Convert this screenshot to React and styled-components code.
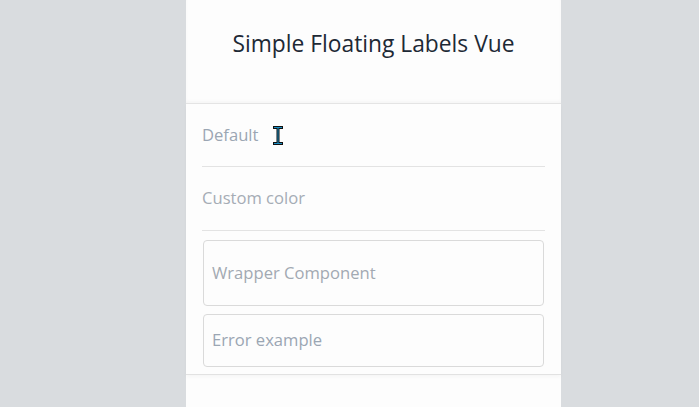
import React from "react";
import styled, { createGlobalStyle } from "styled-components";

const GlobalStyle = createGlobalStyle`
  html, body {
    margin: 0;
    padding: 0;
    background: #d9dcdf;
    font-family: "Open Sans", "Noto Sans", sans-serif;
  }
`;

const Page = styled.div`
  display: flex;
  min-height: 407px;
  padding-left: 186px;
`;

const Card = styled.div`
  width: 375px;
  min-height: 407px;
  background: #fdfdfd;
  display: flex;
  flex-direction: column;
`;

const Header = styled.header`
  height: 104px;
  box-sizing: border-box;
  padding-bottom: 16px;
  display: flex;
  align-items: center;
  justify-content: center;
  border-bottom: 1px solid #e4e4e4;
  box-shadow: 0 -2px 3px rgba(0, 0, 0, 0.03) inset;
`;

const Title = styled.h1`
  margin: 0;
  font-size: 22.8px;
  font-weight: 400;
  color: #1d2935;
`;

const Form = styled.form`
  display: flex;
  flex-direction: column;
  padding: 0 16px 7px;
  border-bottom: 1px solid #e2e2e2;
  box-shadow: 0 2px 4px rgba(0, 0, 0, 0.03);
`;

const LineField = styled.div`
  position: relative;
  height: ${(p) => p.$h}px;
  display: flex;
  align-items: center;
  border-bottom: 1px solid #e3e3e3;
`;

const BoxField = styled.div`
  height: ${(p) => p.$h}px;
  margin: ${(p) => p.$mt}px 1px 0;
  display: flex;
  align-items: center;
  padding-left: 8px;
  border: 1px solid #dadada;
  border-radius: 4px;
  box-sizing: border-box;
`;

const Label = styled.span`
  font-size: 16.6px;
  margin-bottom: 2px;
  color: ${(p) => p.$color || "#9ba6b3"};
`;

const Cursor = styled.svg`
  position: absolute;
  left: 70px;
  top: 22px;
`;

export default function App() {
  return (
    <>
      <GlobalStyle />
      <Page>
        <Card>
          <Header>
            <Title>Simple Floating Labels Vue</Title>
          </Header>
          <Form>
            <LineField $h={62}>
              <Label>Default</Label>
              <Cursor width="12" height="19" viewBox="0 0 12 19">
                <path
                  d="M1 1.5h10M1 17.5h10M6 1.5v16"
                  stroke="#111"
                  strokeWidth="3"
                  fill="none"
                />
                <path
                  d="M2 1.5h8M2 17.5h8M6 2v15"
                  stroke="#1a8fc4"
                  strokeWidth="1"
                  fill="none"
                />
              </Cursor>
            </LineField>
            <LineField $h={63}>
              <Label $color="#a5acb5">Custom color</Label>
            </LineField>
            <BoxField $h={66} $mt={9}>
              <Label $color="#a2a9b2">Wrapper Component</Label>
            </BoxField>
            <BoxField $h={53} $mt={8}>
              <Label>Error example</Label>
            </BoxField>
          </Form>
        </Card>
      </Page>
    </>
  );
}
